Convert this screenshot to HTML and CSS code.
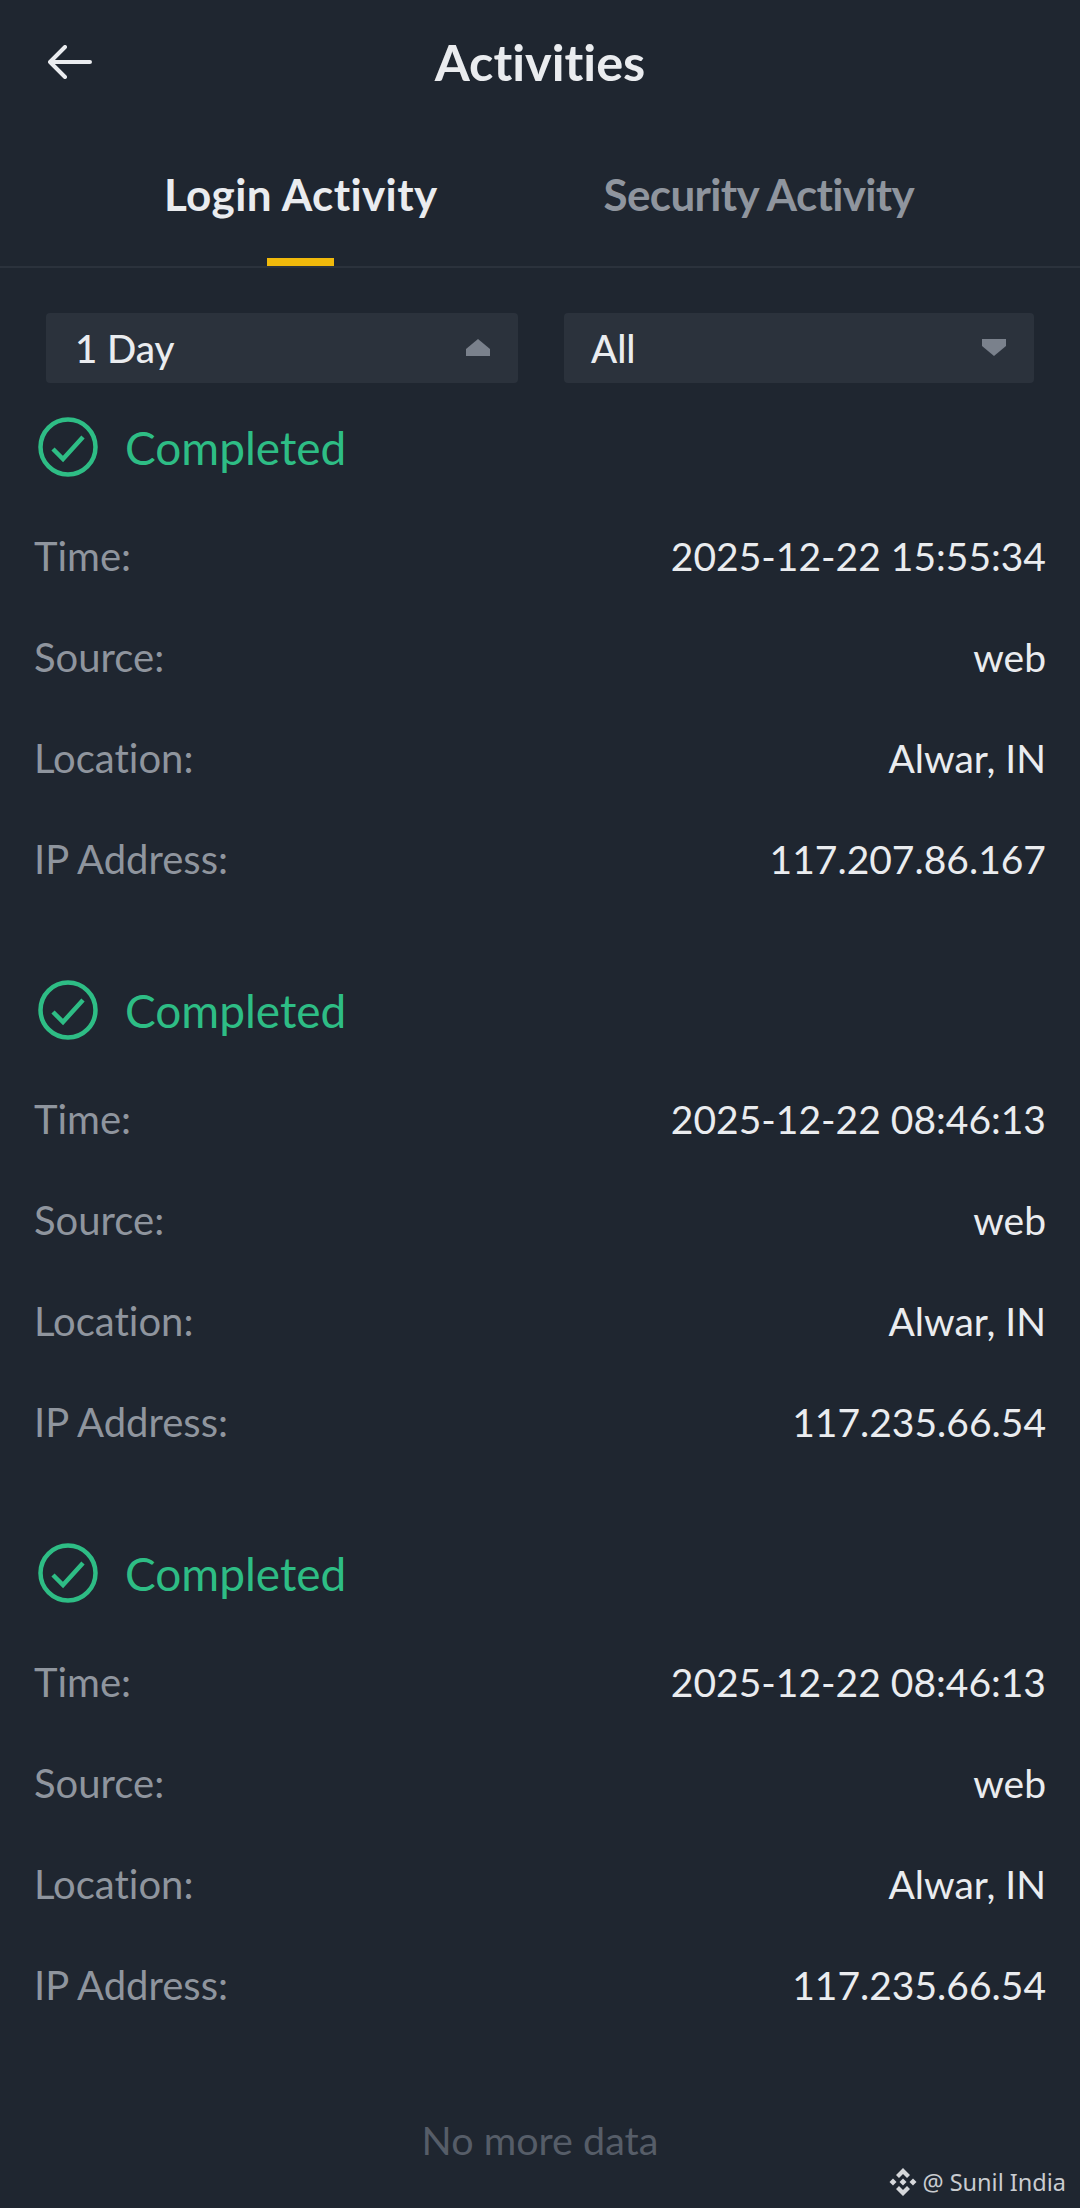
FILE: index.html
```html
<!DOCTYPE html>
<html lang="en">
<head>
  <meta charset="UTF-8">
  <meta name="viewport" content="width=device-width, initial-scale=1.0">
  <title>Activities</title>
  <link rel="stylesheet" href="styles.css">
</head>
<body>
  <div class="page">
    <header class="topbar">
      <svg class="back" viewBox="0 0 44 34" width="44" height="34">
        <path d="M2 17H42M17 2L2 17L17 32" fill="none" stroke="#eaecef" stroke-width="4" stroke-linecap="round" stroke-linejoin="round"/>
      </svg>
      <h1>Activities</h1>
    </header>

    <nav class="tabs">
      <div class="tab active">Login Activity</div>
      <div class="tab">Security Activity</div>
    </nav>

    <div class="filters">
      <div class="select first"><span>1 Day</span><svg class="arrow" viewBox="0 0 24 17" width="24" height="17"><path d="M12 0L24 10V17H0V10Z"/></svg></div>
      <div class="select"><span>All</span><svg class="arrow" viewBox="0 0 24 17" width="24" height="17"><path d="M12 17L24 7V0H0V7Z"/></svg></div>
    </div>

    <section class="item">
      <div class="status">
        <svg viewBox="0 0 60 60" width="60" height="60"><circle cx="30" cy="30" r="27.500" fill="none" stroke="#2ebd85" stroke-width="4.500"/><path d="M15 32L25 42L45 20" fill="none" stroke="#2ebd85" stroke-width="4.500"/></svg>
        <span>Completed</span>
      </div>
      <div class="row"><span class="key">Time:</span><span class="val">2025-12-22 15:55:34</span></div>
      <div class="row"><span class="key">Source:</span><span class="val">web</span></div>
      <div class="row"><span class="key">Location:</span><span class="val">Alwar, IN</span></div>
      <div class="row"><span class="key">IP Address:</span><span class="val">117.207.86.167</span></div>
    </section>

    <section class="item">
      <div class="status">
        <svg viewBox="0 0 60 60" width="60" height="60"><circle cx="30" cy="30" r="27.500" fill="none" stroke="#2ebd85" stroke-width="4.500"/><path d="M15 32L25 42L45 20" fill="none" stroke="#2ebd85" stroke-width="4.500"/></svg>
        <span>Completed</span>
      </div>
      <div class="row"><span class="key">Time:</span><span class="val">2025-12-22 08:46:13</span></div>
      <div class="row"><span class="key">Source:</span><span class="val">web</span></div>
      <div class="row"><span class="key">Location:</span><span class="val">Alwar, IN</span></div>
      <div class="row"><span class="key">IP Address:</span><span class="val">117.235.66.54</span></div>
    </section>

    <section class="item">
      <div class="status">
        <svg viewBox="0 0 60 60" width="60" height="60"><circle cx="30" cy="30" r="27.500" fill="none" stroke="#2ebd85" stroke-width="4.500"/><path d="M15 32L25 42L45 20" fill="none" stroke="#2ebd85" stroke-width="4.500"/></svg>
        <span>Completed</span>
      </div>
      <div class="row"><span class="key">Time:</span><span class="val">2025-12-22 08:46:13</span></div>
      <div class="row"><span class="key">Source:</span><span class="val">web</span></div>
      <div class="row"><span class="key">Location:</span><span class="val">Alwar, IN</span></div>
      <div class="row"><span class="key">IP Address:</span><span class="val">117.235.66.54</span></div>
    </section>

    <div class="nomore">No more data</div>
  </div>

  <div class="mark">
    <svg viewBox="0 0 28 28" width="28" height="28" fill="#d5d7da">
      <path d="M14 0L21 7L18 10L14 6L10 10L7 7Z"/>
      <path d="M14 28L21 21L18 18L14 22L10 18L7 21Z"/>
      <path d="M4 10.500L7.500 14L4 17.500L0.500 14Z"/>
      <path d="M24 10.500L27.500 14L24 17.500L20.500 14Z"/>
      <path d="M14 10.500L17.500 14L14 17.500L10.500 14Z"/>
    </svg>
    <span>@ Sunil India</span>
  </div>
</body>
</html>
```

FILE: styles.css
```css
html, body {
  margin: 0;
  padding: 0;
}
body {
  background: #1f2630;
  color: #eaecef;
  font-family: 'Lato', 'Open Sans', sans-serif;
  font-variant-ligatures: none;
  width: 1080px;
  height: 2208px;
  overflow: hidden;
  position: relative;
}
.topbar {
  height: 126px;
  display: flex;
  align-items: center;
  justify-content: center;
  position: relative;
}
.back {
  position: absolute;
  left: 48px;
  top: 45px;
}
h1 {
  margin: -3px 0 0;
  font-size: 50.500px;
  font-weight: 700;
}
.tabs {
  height: 140px;
  display: flex;
  border-bottom: 2px solid #2b323c;
  padding-left: 164px;
  gap: 166px;
}
.tab {
  font-size: 44px;
  font-weight: 700;
  color: #8f959e;
  letter-spacing: -0.650px;
  line-height: 136px;
  position: relative;
}
.tab.active {
  color: #eaecef;
  letter-spacing: 0.400px;
}
.tab.active::after {
  content: "";
  position: absolute;
  left: 103px;
  bottom: 0;
  width: 67px;
  height: 8px;
  background: #f0b90b;
}
.filters {
  display: flex;
  gap: 46px;
  padding: 45px 46px 17px;
}
.select {
  flex: 1;
  height: 70px;
  background: #2b323c;
  border-radius: 4px;
  display: flex;
  align-items: center;
  justify-content: space-between;
  padding: 0 28px 0 27px;
  font-size: 38.500px;
  font-weight: 500;
}
.select.first {
  padding-left: 29px;
}
.arrow {
  fill: #7a818c;
  margin-bottom: 1px;
}
.item {
  padding: 0 34px;
  height: 563px;
}
.status {
  display: flex;
  align-items: center;
  gap: 27px;
  height: 94px;
  margin-bottom: 11px;
  padding-left: 4px;
  color: #2ebd85;
  font-size: 46px;
}
.row {
  height: 101px;
  display: flex;
  align-items: center;
  justify-content: space-between;
  font-size: 39px;
}
.key {
  color: #8f959e;
  font-size: 40px;
}
.nomore {
  padding-top: 28px;
  text-align: center;
  font-size: 39.500px;
  line-height: 46px;
  color: #565d68;
}
.mark {
  position: absolute;
  right: 14px;
  bottom: 10px;
  display: flex;
  align-items: center;
  gap: 5px;
  font-family: 'Noto Sans', sans-serif;
  font-size: 23.500px;
  color: #c9ccd0;
}
```
